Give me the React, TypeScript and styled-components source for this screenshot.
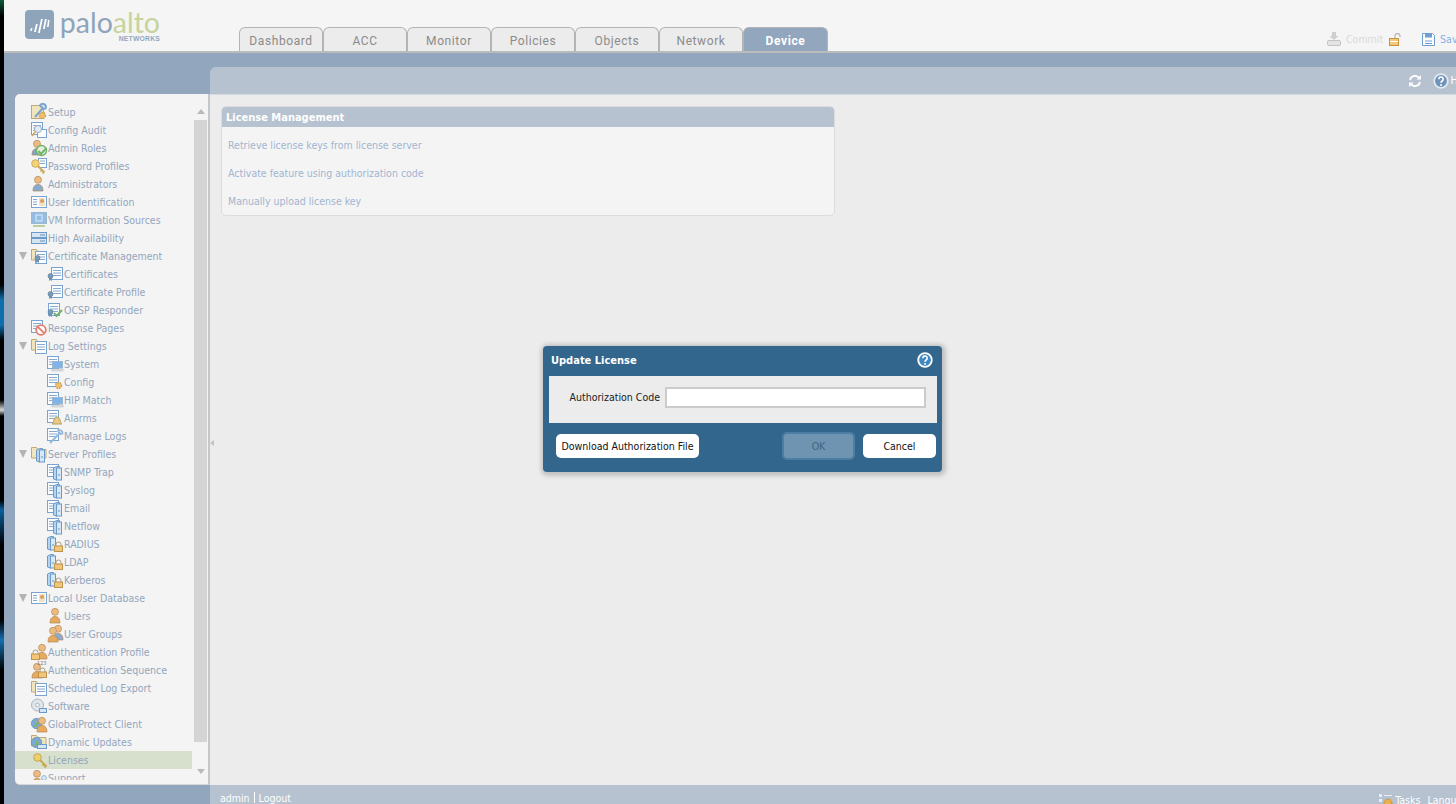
import React from 'react';
import styled, { createGlobalStyle } from 'styled-components';

const GlobalStyle = createGlobalStyle`
  html, body, #root { margin: 0; padding: 0; width: 100%; height: 100%; overflow: hidden; }
  body { font-family: "DejaVu Sans", "Liberation Sans", sans-serif; font-stretch: condensed; font-size: 10.5px; background: #000; }
`;

const Page = styled.div`
  position: relative;
  display: flex;
  width: 1456px;
  height: 804px;
  overflow: hidden;
`;

const DesktopEdge = styled.div`
  flex: 0 0 4px;
  background: linear-gradient(180deg, #0a5c3a 0, #000 16px, #000 285px, #0f6fae 300px, #0f6fae 325px, #000 340px, #000 400px, #d8d8d8 410px, #000 416px, #000 500px, #0b5f9e 510px, #000 545px, #000 620px, #1470b0 640px, #000 670px);
`;

const Win = styled.div`
  flex: 1;
  min-width: 0;
  display: flex;
  flex-direction: column;
`;

const Header = styled.header`
  flex: 0 0 53px;
  box-sizing: border-box;
  display: flex;
  align-items: flex-end;
  background: #f5f5f5;
  border-bottom: 2px solid #bcbcbc;
  overflow: hidden;
`;

const Logo = styled.div`
  flex: 0 0 235px;
  align-self: flex-start;
  box-sizing: border-box;
  padding: 10px 0 0 21px;
  display: flex;
  gap: 7px;
`;

const LogoWords = styled.div`
  display: flex;
  flex-direction: column;
  align-items: flex-end;
  width: 99px;
`;

const LogoName = styled.div`
  font-family: "Lato", sans-serif;
  font-stretch: normal;
  font-size: 28.5px;
  line-height: 25px;
  color: #8ea4bb;
  span { color: #c6d49b; }
`;

const LogoSub = styled.div`
  font-family: "Liberation Sans", sans-serif;
  font-stretch: normal;
  font-weight: 700;
  font-size: 6.8px;
  line-height: 7px;
  letter-spacing: 0.2px;
  color: #92a7be;
`;

const Tabs = styled.nav`
  display: flex;
  flex-shrink: 0;
`;

const Tab = styled.div<{ $active?: boolean }>`
  box-sizing: border-box;
  width: ${p => (p.$active ? 85 : 84)}px;
  height: 24px;
  display: flex;
  align-items: center;
  justify-content: center;
  padding-top: 3px;
  border: 1px solid #b4b4b4;
  border-bottom: none;
  border-radius: 6px 6px 0 0;
  background: ${p => (p.$active ? '#92a6bd' : '#ececec')};
  color: ${p => (p.$active ? '#fff' : '#8b8b8b')};
  font-family: "Roboto", sans-serif;
  font-stretch: normal;
  font-weight: ${p => (p.$active ? 700 : 400)};
  font-size: 12px;
  letter-spacing: 0.6px;
`;

const HeaderActions = styled.div`
  flex-shrink: 0;
  display: flex;
  align-items: center;
  margin-left: 499px;
  height: 24px;
`;

const ActionText = styled.span<{ $muted?: boolean }>`
  margin-left: 5px;
  color: ${p => (p.$muted ? '#dadada' : '#7fb1e6')};
  font-size: 10.5px;
`;

const Spacer = styled.span<{ $w: number }>`
  display: inline-block;
  width: ${p => p.$w}px;
`;

const Body = styled.div`
  flex: 1;
  min-height: 0;
  display: flex;
  background: #92a6bd;
`;

const SideColumn = styled.div`
  flex: 0 0 206px;
  box-sizing: border-box;
  padding: 41px 0 19px 11px;
  display: flex;
`;

const TreePanel = styled.div`
  flex: 1;
  display: flex;
  background: #f4f4f4;
  border-right: 2px solid #c3c7cc;
  border-radius: 5px 0 0 5px;
  border-bottom: 1px solid #d6d6d6;
  padding: 9px 0 4px;
  overflow: hidden;
`;

const Tree = styled.ul`
  flex: 0 0 177px;
  margin: 0;
  padding: 0;
  list-style: none;
  overflow: hidden;
`;

const Row = styled.li<{ $depth: number; $selected?: boolean }>`
  display: flex;
  align-items: center;
  height: 18px;
  padding-left: ${p => 4 + p.$depth * 16}px;
  background: ${p => (p.$selected ? '#d7e0cc' : 'transparent')};
  color: #93a6bd;
  white-space: nowrap;
`;

const Twisty = styled.span<{ $open?: boolean }>`
  flex: 0 0 12px;
  height: 8px;
  ${p =>
    p.$open
      ? `
    &::before {
      content: '';
      display: block;
      width: 0;
      height: 0;
      border-left: 4.5px solid transparent;
      border-right: 4.5px solid transparent;
      border-top: 8px solid #b4b4b4;
    }
  `
      : ''}
`;

const RowIcon = styled.svg`
  flex: 0 0 16px;
  width: 16px;
  height: 16px;
  margin-right: 1px;
  opacity: 0.82;
  overflow: visible;
`;

const Scrollbar = styled.div`
  flex: 0 0 15px;
  margin-left: 1px;
  display: flex;
  flex-direction: column;
  align-items: center;
`;

const ScrollArrow = styled.span<{ $down?: boolean }>`
  flex: 0 0 17px;
  display: flex;
  align-items: center;
  &::before {
    content: '';
    width: 0;
    height: 0;
    border-left: 4px solid transparent;
    border-right: 4px solid transparent;
    ${p => (p.$down ? 'border-top: 5px solid #b9b9b9;' : 'border-bottom: 5px solid #b9b9b9;')}
  }
`;

const ScrollThumb = styled.div`
  width: 13px;
  height: 622px;
  background: #d4d4d4;
`;

const ScrollRest = styled.div`
  flex: 1;
`;

const MainColumn = styled.main`
  flex: 1;
  min-width: 0;
  padding-top: 14px;
  display: flex;
  flex-direction: column;
`;

const TopBar = styled.div`
  flex: 0 0 28px;
  box-sizing: border-box;
  display: flex;
  align-items: center;
  justify-content: flex-end;
  background: #b6c2d0;
  border-bottom: 1px solid #d5dbe3;
  border-radius: 6px 0 0 0;
  color: #fff;
  font-size: 11px;
  overflow: hidden;
`;

const HelpLabel = styled.span`
  margin-right: -17px;
`;

const Content = styled.div`
  flex: 1;
  min-height: 0;
  position: relative;
  background: #ececec;
  padding: 11px 11px;
`;

const Splitter = styled.span`
  position: absolute;
  left: 0;
  top: 345px;
  width: 0;
  height: 0;
  border-top: 3px solid transparent;
  border-bottom: 3px solid transparent;
  border-right: 4px solid #c2c2c2;
`;

const Card = styled.section`
  width: 614px;
  box-sizing: border-box;
  background: #f4f4f4;
  border: 1px solid #dcdcdc;
  border-radius: 5px;
  overflow: hidden;
`;

const CardTitle = styled.h2`
  margin: 0;
  height: 20px;
  box-sizing: border-box;
  display: flex;
  align-items: center;
  padding: 1px 0 0 4px;
  background: #b6c2d0;
  color: #fff;
  font-size: 11px;
  font-weight: 700;
`;

const CardLinks = styled.div`
  display: flex;
  flex-direction: column;
  padding: 4px 6px 0;
  height: 84px;
`;

const CardLink = styled.a`
  height: 28px;
  display: flex;
  align-items: center;
  color: #a2b4d0;
`;

const Footer = styled.footer`
  flex: 0 0 19px;
  box-sizing: border-box;
  display: flex;
  align-items: flex-start;
  padding: 7px 0 0 10px;
  background: #b6c2d0;
  color: #fff;
  line-height: 13px;
  overflow: hidden;
  white-space: nowrap;
`;

const FooterRight = styled.div`
  margin-left: auto;
  display: flex;
  align-items: center;
  gap: 7px;
  margin-right: -18px;
`;

const TaskIcon = styled.svg`
  width: 16px;
  height: 16px;
  margin-right: -6px;
`;

const FooterSep = styled.span`
  margin: 0 4px;
  border-left: 1px solid #fff;
  height: 11px;
`;

const DialogShadow = styled.div`
  position: absolute;
  left: 543px;
  top: 346px;
  width: 399px;
  height: 126px;
`;

const Dialog = styled.div`
  height: 100%;
  display: flex;
  flex-direction: column;
  background: #33668c;
  border-radius: 4px;
  box-shadow: 1px 1px 4px 3px #c2c2c2;
`;

const DialogTitle = styled.div`
  flex: 0 0 30px;
  box-sizing: border-box;
  display: flex;
  align-items: center;
  justify-content: space-between;
  padding: 0 9px 2px 8px;
  color: #fff;
  font-weight: 700;
  font-size: 11px;
`;

const DialogBody = styled.div`
  flex: 0 0 47px;
  box-sizing: border-box;
  display: flex;
  align-items: center;
  margin: 0 5px 0 6px;
  background: #ececec;
  color: #222;
  padding: 0 11px 5px 18px;
`;

const FieldLabel = styled.label`
  margin-right: 5px;
  width: 93px;
  text-align: right;
  white-space: nowrap;
`;

const TextInput = styled.input`
  flex: 1;
  min-width: 0;
  box-sizing: border-box;
  height: 21px;
  padding: 0 3px;
  background: #fff;
  border: 2px solid #cbcbcb;
  outline: none;
`;

const DialogFooter = styled.div`
  flex: 1;
  display: flex;
  align-items: center;
  padding: 0 6px 3px 13px;
`;

const Button = styled.button<{ $w: number; $disabled?: boolean }>`
  box-sizing: border-box;
  width: ${p => p.$w}px;
  height: ${p => (p.$disabled ? 28 : 24)}px;
  padding: 0;
  font-family: inherit;
  font-stretch: condensed;
  font-size: 10.5px;
  color: ${p => (p.$disabled ? '#3f6580' : '#111')};
  background: ${p => (p.$disabled ? '#6e94b1' : '#fff')};
  border: ${p => (p.$disabled ? '2px solid #4b7ea4' : 'none')};
  border-radius: 5px;
  white-space: nowrap;
`;

const Grow = styled.span`
  flex: 1;
`;

const ButtonGap = styled.span`
  flex: 0 0 8px;
`;

const Doc = () => (
  <g>
    <rect x="0.5" y="0.5" width="11" height="12" fill="#fff" stroke="#5f93c8" />
    <path d="M2 3.5h8M2 6h8M2 8.5h8" stroke="#6d9ccc" />
  </g>
);
const Folder = () => (
  <path d="M0.5 12V1.500h5l1.500 2h8V12z" fill="#f0e2b4" stroke="#b39a5e" />
);
const Person = ({ x = 0, y = 0, c = '#e39a3c' }: { x?: number; y?: number; c?: string }) => (
  <g transform={`translate(${x} ${y})`}>
    <circle cx="6" cy="3.800" r="3.500" fill="#eab06a" stroke="#a9713a" strokeWidth="0.7" />
    <path d="M1 15c0-4.500 2-6.500 5-6.500S11 10.500 11 15z" fill={c} stroke="#a9713a" strokeWidth="0.7" />
  </g>
);
const Lock = ({ x = 7, y = 6 }: { x?: number; y?: number }) => (
  <g transform={`translate(${x} ${y})`}>
    <path d="M2 4V2.500a2.500 2.500 0 0 1 5 0V4" fill="none" stroke="#9a8a68" />
    <rect x="0.5" y="4" width="8" height="5.500" fill="#f1bc5c" stroke="#b27f2c" />
  </g>
);
const Server = ({ x = 0, y = 0 }: { x?: number; y?: number }) => (
  <g transform={`translate(${x} ${y})`}>
    <path d="M0.500 2l3-1.500h3V12l-3 2-3-1z" fill="#a8cdf0" stroke="#4f86bd" />
    <rect x="3.500" y="2" width="5" height="12" fill="#d4e6f8" stroke="#4f86bd" />
    <circle cx="6" cy="9" r="0.8" fill="#3b6fa5" />
  </g>
);
const Ribbon = ({ x = 0, y = 8 }: { x?: number; y?: number }) => (
  <g transform={`translate(${x} ${y})`}>
    <path d="M2 4v4l1.500-1L5 8V4" fill="#4f86bd" />
    <circle cx="3.500" cy="3" r="2.500" fill="#5e87ac" stroke="#3b6486" strokeWidth="0.6" />
  </g>
);
const Check = ({ x = 7, y = 8 }: { x?: number; y?: number }) => (
  <path transform={`translate(${x} ${y})`} d="M0 3l2.500 3L8 0" fill="none" stroke="#56a44c" strokeWidth="2" />
);
const Gear = ({ x = 8, y = 8 }: { x?: number; y?: number }) => (
  <circle cx={x + 3.500} cy={y + 3.500} r="3" fill="#efb553" stroke="#c78a2c" strokeDasharray="1.500 1" strokeWidth="1.400" />
);
const Screen = ({ x = 4, y = 6 }: { x?: number; y?: number }) => (
  <g transform={`translate(${x} ${y})`}>
    <rect x="0.500" y="0.500" width="10" height="6.500" fill="#66a6e8" stroke="#8aaac8" />
    <rect x="0" y="8" width="11" height="2" fill="#d8dde2" stroke="#a4adb6" strokeWidth="0.5" />
  </g>
);
const Key = ({ x = 0, y = 0, c = '#f2cd5a' }: { x?: number; y?: number; c?: string }) => (
  <g transform={`translate(${x} ${y})`}>
    <circle cx="4.500" cy="4.500" r="3.800" fill={c} stroke="#c79a36" />
    <path d="M7 7l6.500 6.500M11 11l-1.500 1.500M13 13l-1.500 1.500" stroke="#c79a36" strokeWidth="1.800" />
  </g>
);
const Globe = ({ x = 0, y = 2 }: { x?: number; y?: number }) => (
  <g transform={`translate(${x} ${y})`}>
    <circle cx="5.500" cy="5.500" r="5.200" fill="#5e9bd6" stroke="#46739e" strokeWidth="0.700" />
    <path d="M2 3c2-1 3 0 3 2S3 7 3 8s2 2 3 0 2-1 3-3" fill="#6aa35a" />
  </g>
);

const icons: Record<string, React.ReactNode> = {
  setup: (
    <>
      <rect x="0.500" y="1.500" width="12" height="13" fill="#f0e2b4" stroke="#b39a5e" />
      <path d="M4 13L12 4M9 1.500a3 3 0 0 1 5.500 3l-2 .5-2-2z" stroke="#5f93c8" strokeWidth="2" fill="#cfe2f5" />
      <Gear x={8} y={8} />
    </>
  ),
  audit: (
    <>
      <Doc />
      <rect x="6.500" y="7.500" width="9" height="8" fill="#fff" stroke="#5f93c8" />
      <circle cx="7" cy="7" r="3.500" fill="#dcebf8" stroke="#88a0b6" />
      <path d="M4.500 9.500L1 14" stroke="#c79a36" strokeWidth="1.600" />
    </>
  ),
  roles: (
    <>
      <Person c="#5f93c8" />
      <circle cx="10.500" cy="10.500" r="5" fill="#dff0d8" stroke="#56a44c" strokeWidth="1.400" />
      <Check x={7.500} y={8} />
    </>
  ),
  password: (
    <>
      <rect x="7.500" y="0.500" width="8" height="9" fill="#fff" stroke="#5f93c8" />
      <path d="M9 3h5M9 5.500h5" stroke="#6d9ccc" />
      <Key y={1} />
    </>
  ),
  admin: <Person x={1} y={0} c="#6f9ccb" />,
  userid: (
    <>
      <rect x="0.500" y="2.500" width="15" height="11" fill="#fff" stroke="#5f93c8" />
      <path d="M2 5.500h4M2 8h4M2 10.500h4" stroke="#6d9ccc" />
      <rect x="8" y="4" width="6" height="8" fill="#f5dcb8" />
      <circle cx="11" cy="7" r="2" fill="#d08b46" />
    </>
  ),
  vm: (
    <>
      <rect x="0.500" y="0.500" width="15" height="11" fill="#7fb2e4" stroke="#8aaac8" />
      <rect x="5" y="3" width="6" height="6" fill="none" stroke="#dcebf8" />
      <rect x="2" y="13" width="12" height="2" fill="#a9c98f" />
    </>
  ),
  ha: (
    <>
      <rect x="0.500" y="2.500" width="15" height="5" fill="#cfe2f5" stroke="#4f86bd" />
      <rect x="0.500" y="8.500" width="15" height="5" fill="#cfe2f5" stroke="#4f86bd" />
      <path d="M9 5h5M9 11h5" stroke="#4f7da8" />
    </>
  ),
  certFolder: (
    <>
      <Folder />
      <g transform="translate(4 3)"><Doc /></g>
      <Ribbon x={3} y={7} />
    </>
  ),
  cert: (
    <>
      <g transform="translate(4 1)"><Doc /></g>
      <Ribbon x={0} y={7} />
    </>
  ),
  ocsp: (
    <>
      <g transform="translate(1 1)"><Doc /></g>
      <Ribbon x={0} y={7} />
      <Check x={7} y={8} />
    </>
  ),
  response: (
    <>
      <Doc />
      <circle cx="10" cy="10" r="4.800" fill="#fff" stroke="#e0644f" strokeWidth="1.800" />
      <path d="M6.800 6.800l6.400 6.400" stroke="#e0644f" strokeWidth="1.800" />
    </>
  ),
  logFolder: (
    <>
      <Folder />
      <g transform="translate(4 3)"><Doc /></g>
    </>
  ),
  logSystem: (
    <>
      <Doc />
      <Screen x={5} y={5} />
    </>
  ),
  logConfig: (
    <>
      <Doc />
      <Gear />
    </>
  ),
  logHip: (
    <>
      <Doc />
      <Screen x={5} y={5} />
    </>
  ),
  logAlarm: (
    <>
      <Doc />
      <path d="M5 14c2-1 1.500-7 5-7s3 6 5 7z" fill="#e8c06a" stroke="#a98a3e" />
    </>
  ),
  logManage: (
    <>
      <Doc />
      <path d="M3 15L12 6M11 2.500a3 3 0 0 1 4.500 3l-2 .5-2-2z" stroke="#7eaad6" strokeWidth="1.800" fill="#e2eef9" />
    </>
  ),
  serverFolder: (
    <>
      <Folder />
      <Server x={5} y={2} />
    </>
  ),
  serverDoc: (
    <>
      <Doc />
      <Server x={6} y={2} />
    </>
  ),
  serverLock: (
    <>
      <Server x={0} y={0} />
      <Lock x={7} y={6} />
    </>
  ),
  users: <Person x={2} y={0} />,
  groups: (
    <>
      <Person x={5} y={-1} c="#6f9ccb" />
      <Person x={0} y={1} />
    </>
  ),
  authProfile: (
    <>
      <Person x={5} y={0} />
      <Lock x={0} y={6} />
    </>
  ),
  authSeq: (
    <>
      <Person x={0} y={1} />
      <Lock x={7} y={6} />
      <text x="6" y="3" fontSize="5.500" fill="#555" fontFamily="DejaVu Sans, sans-serif">123</text>
    </>
  ),
  export: (
    <>
      <Folder />
      <g transform="translate(4 3)"><Doc /></g>
    </>
  ),
  software: (
    <>
      <circle cx="6.500" cy="7" r="6" fill="#dde3e9" stroke="#9aa6b2" />
      <circle cx="6.500" cy="7" r="1.800" fill="#fff" stroke="#9aa6b2" />
      <rect x="8.500" y="10.500" width="7" height="4" fill="#cfe2f5" stroke="#4f86bd" />
    </>
  ),
  globalprotect: (
    <>
      <Globe />
      <Person x={5} y={1} />
    </>
  ),
  updates: (
    <>
      <Folder />
      <Globe x={0} y={3} />
      <rect x="6.500" y="10.500" width="9" height="4" fill="#cfe2f5" stroke="#4f86bd" />
    </>
  ),
  licenses: <Key x={2} y={1} />,
  support: (
    <>
      <Person x={0} y={0} />
      <path d="M8 14l6-6" stroke="#7eaad6" strokeWidth="2.200" />
      <circle cx="13" cy="8" r="2.400" fill="#d7e8f7" stroke="#7eaad6" />
    </>
  ),
};

type TreeItem = { label: string; icon: string; depth?: number; open?: boolean; selected?: boolean };

const treeItems: TreeItem[] = [
  { label: 'Setup', icon: 'setup' },
  { label: 'Config Audit', icon: 'audit' },
  { label: 'Admin Roles', icon: 'roles' },
  { label: 'Password Profiles', icon: 'password' },
  { label: 'Administrators', icon: 'admin' },
  { label: 'User Identification', icon: 'userid' },
  { label: 'VM Information Sources', icon: 'vm' },
  { label: 'High Availability', icon: 'ha' },
  { label: 'Certificate Management', icon: 'certFolder', open: true },
  { label: 'Certificates', icon: 'cert', depth: 1 },
  { label: 'Certificate Profile', icon: 'cert', depth: 1 },
  { label: 'OCSP Responder', icon: 'ocsp', depth: 1 },
  { label: 'Response Pages', icon: 'response' },
  { label: 'Log Settings', icon: 'logFolder', open: true },
  { label: 'System', icon: 'logSystem', depth: 1 },
  { label: 'Config', icon: 'logConfig', depth: 1 },
  { label: 'HIP Match', icon: 'logHip', depth: 1 },
  { label: 'Alarms', icon: 'logAlarm', depth: 1 },
  { label: 'Manage Logs', icon: 'logManage', depth: 1 },
  { label: 'Server Profiles', icon: 'serverFolder', open: true },
  { label: 'SNMP Trap', icon: 'serverDoc', depth: 1 },
  { label: 'Syslog', icon: 'serverDoc', depth: 1 },
  { label: 'Email', icon: 'serverDoc', depth: 1 },
  { label: 'Netflow', icon: 'serverDoc', depth: 1 },
  { label: 'RADIUS', icon: 'serverLock', depth: 1 },
  { label: 'LDAP', icon: 'serverLock', depth: 1 },
  { label: 'Kerberos', icon: 'serverLock', depth: 1 },
  { label: 'Local User Database', icon: 'userid', open: true },
  { label: 'Users', icon: 'users', depth: 1 },
  { label: 'User Groups', icon: 'groups', depth: 1 },
  { label: 'Authentication Profile', icon: 'authProfile' },
  { label: 'Authentication Sequence', icon: 'authSeq' },
  { label: 'Scheduled Log Export', icon: 'export' },
  { label: 'Software', icon: 'software' },
  { label: 'GlobalProtect Client', icon: 'globalprotect' },
  { label: 'Dynamic Updates', icon: 'updates' },
  { label: 'Licenses', icon: 'licenses', selected: true },
  { label: 'Support', icon: 'support' },
];

const tabNames = ['Dashboard', 'ACC', 'Monitor', 'Policies', 'Objects', 'Network', 'Device'];

const LogoMark = () => (
  <svg width="29" height="29" viewBox="0 0 29 29">
    <rect width="29" height="29" rx="4" fill="#8ea4bb" />
    <path d="M5 21l1-3h1.600l-1 3zM9 22l2-8h1.800l-2 8zM13 23l3-14h1.800l-3 14zM18 19l2-10h1.800l-2 10zM22 17l1-7h1.600l-1 7z" fill="#fff" />
  </svg>
);

const HelpBadge = ({ size, fill, ring }: { size: number; fill: string; ring: string }) => (
  <svg width={size} height={size} viewBox="0 0 16 16">
    <circle cx="8" cy="8" r="6.800" fill={fill} stroke={ring} strokeWidth="1.800" />
    <path d="M5.800 6.200a2.200 2.200 0 1 1 3.400 1.800c-.8.500-1.200.9-1.200 1.800" fill="none" stroke="#fff" strokeWidth="1.600" />
    <circle cx="8" cy="12" r="1" fill="#fff" />
  </svg>
);

export default function App() {
  return (
    <Page>
      <GlobalStyle />
      <DesktopEdge />
      <Win>
        <Header>
          <Logo>
            <LogoMark />
            <LogoWords>
              <LogoName>palo<span>alto</span></LogoName>
              <LogoSub>NETWORKS</LogoSub>
            </LogoWords>
          </Logo>
          <Tabs>
            {tabNames.map(name => (
              <Tab key={name} $active={name === 'Device'}>{name}</Tab>
            ))}
          </Tabs>
          <HeaderActions>
            <svg width="14" height="14" viewBox="0 0 14 14">
              <path d="M5 0h4v4h2.500L7 8 2.500 4H5z" fill="#cfcfcf" />
              <rect x="0.500" y="8.500" width="13" height="5" rx="1.500" fill="#e4e4e4" stroke="#c4c4c4" />
            </svg>
            <ActionText $muted>Commit</ActionText>
            <Spacer $w={6} />
            <svg width="13" height="13" viewBox="0 0 13 13">
              <path d="M6 5V3a2.500 2.500 0 0 1 5 0v1" fill="none" stroke="#b8b8b8" strokeWidth="1.300" />
              <rect x="0.500" y="5.500" width="9" height="7" fill="#f3c878" stroke="#c59340" />
              <path d="M1 8.500h8" stroke="#fff" />
            </svg>
            <Spacer $w={20} />
            <svg width="13" height="13" viewBox="0 0 13 13">
              <path d="M.5.500h10l2 2v10H.5z" fill="#fff" stroke="#6f9fd0" />
              <rect x="3" y="1" width="7" height="3.500" fill="#6f9fd0" />
              <path d="M3 8h7M3 10.500h7" stroke="#6f9fd0" />
            </svg>
            <ActionText>Save</ActionText>
          </HeaderActions>
        </Header>
        <Body>
          <SideColumn>
            <TreePanel>
              <Tree>
                {treeItems.map(item => (
                  <Row key={item.label} $depth={item.depth ?? 0} $selected={item.selected}>
                    <Twisty $open={item.open} />
                    <RowIcon viewBox="0 0 16 16">{icons[item.icon]}</RowIcon>
                    {item.label}
                  </Row>
                ))}
              </Tree>
              <Scrollbar>
                <ScrollArrow />
                <ScrollThumb />
                <ScrollRest />
                <ScrollArrow $down />
              </Scrollbar>
            </TreePanel>
          </SideColumn>
          <MainColumn>
            <TopBar>
              <svg width="14" height="12" viewBox="0 0 14 12">
                <path d="M2 5a5 5 0 0 1 9-2M12 7a5 5 0 0 1-9 2" fill="none" stroke="#fff" strokeWidth="1.800" />
                <path d="M13 0v4.500H8.500zM1 12V7.500h4.500z" fill="#fff" />
              </svg>
              <Spacer $w={11} />
              <HelpBadge size={16} fill="#6f93b8" ring="#dfe8f1" />
              <Spacer $w={1} />
              <HelpLabel>Help</HelpLabel>
            </TopBar>
            <Content>
              <Splitter />
              <Card>
                <CardTitle>License Management</CardTitle>
                <CardLinks>
                  <CardLink>Retrieve license keys from license server</CardLink>
                  <CardLink>Activate feature using authorization code</CardLink>
                  <CardLink>Manually upload license key</CardLink>
                </CardLinks>
              </Card>
            </Content>
            <Footer>
              admin
              <FooterSep />
              Logout
              <FooterRight>
                <TaskIcon viewBox="0 0 16 16">
                  <path d="M1 2h3v3H1zM1 7h3v3H1zM1 12h3v3H1z" fill="#e8eef4" />
                  <path d="M6 3.500h8" stroke="#e8eef4" />
                  <circle cx="10" cy="11" r="4" fill="#e8b04e" stroke="#b98428" strokeDasharray="1.500 1" />
                </TaskIcon>
                <span>Tasks</span>
                <span>Language</span>
              </FooterRight>
            </Footer>
          </MainColumn>
        </Body>
      </Win>
      <DialogShadow>
        <Dialog>
          <DialogTitle>
            Update License
            <HelpBadge size={16} fill="#3f88c0" ring="#ffffff" />
          </DialogTitle>
          <DialogBody>
            <FieldLabel>Authorization Code</FieldLabel>
            <TextInput />
          </DialogBody>
          <DialogFooter>
            <Button $w={143}>Download Authorization File</Button>
            <Grow />
            <Button $w={73} $disabled>OK</Button>
            <ButtonGap />
            <Button $w={73}>Cancel</Button>
          </DialogFooter>
        </Dialog>
      </DialogShadow>
    </Page>
  );
}
